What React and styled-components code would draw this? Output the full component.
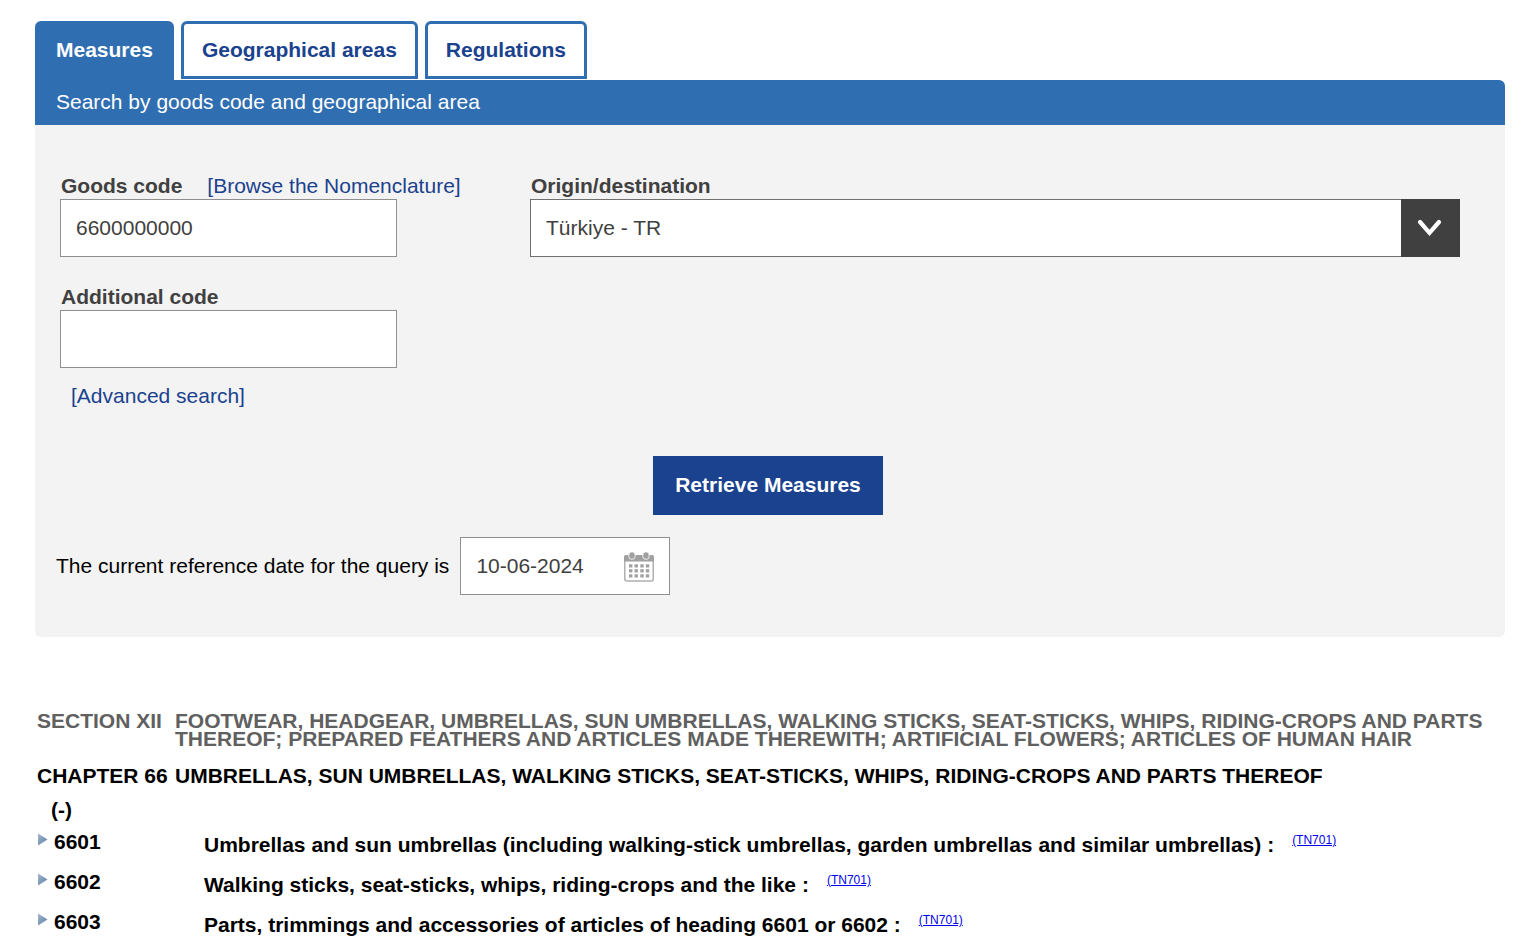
import { useState } from "react";
import styled, { createGlobalStyle } from "styled-components";

const tabs = ["Measures", "Geographical areas", "Regulations"];

const headings = [
  {
    code: "6601",
    text: "Umbrellas and sun umbrellas (including walking-stick umbrellas, garden umbrellas and similar umbrellas) :",
  },
  {
    code: "6602",
    text: "Walking sticks, seat-sticks, whips, riding-crops and the like :",
  },
  {
    code: "6603",
    text: "Parts, trimmings and accessories of articles of heading 6601 or 6602 :",
  },
];

export default function App() {
  const [activeTab, setActiveTab] = useState("Measures");

  return (
    <>
      <GlobalStyle />
      <Page>
        <TabList role="tablist">
          {tabs.map((tab) => (
            <Tab
              key={tab}
              type="button"
              role="tab"
              aria-selected={tab === activeTab}
              $active={tab === activeTab}
              onClick={() => setActiveTab(tab)}
            >
              {tab}
            </Tab>
          ))}
        </TabList>
        <SearchForm />
        <Results />
      </Page>
    </>
  );
}

function SearchForm() {
  return (
    <Panel onSubmit={(e) => e.preventDefault()}>
      <PanelTitle>Search by goods code and geographical area</PanelTitle>
      <Fields>
        <Column>
          <Field>
            <LabelRow>
              <Label htmlFor="goodsCode">Goods code</Label>
              <PanelLink href="#nomenclature">
                [Browse the Nomenclature]
              </PanelLink>
            </LabelRow>
            <Input id="goodsCode" defaultValue="6600000000" />
          </Field>
          <Field>
            <LabelRow>
              <Label htmlFor="additionalCode">Additional code</Label>
            </LabelRow>
            <Input id="additionalCode" />
          </Field>
          <Advanced>
            <PanelLink href="#advanced">[Advanced search]</PanelLink>
          </Advanced>
        </Column>
        <Column>
          <Field>
            <LabelRow>
              <Label htmlFor="origin">Origin/destination</Label>
            </LabelRow>
            <SelectBox>
              <Select id="origin" defaultValue="TR">
                <option value="TR">Türkiye - TR</option>
              </Select>
              <SelectArrow>
                <svg width="27" height="20" viewBox="0 0 27 20" aria-hidden="true">
                  <path
                    d="M3 4L12.5 14.8L22 4"
                    fill="none"
                    stroke="#fff"
                    strokeWidth="4.2"
                    strokeLinecap="round"
                  />
                </svg>
              </SelectArrow>
            </SelectBox>
          </Field>
        </Column>
      </Fields>
      <Actions>
        <SubmitButton type="submit">Retrieve Measures</SubmitButton>
      </Actions>
      <DateRow>
        <label htmlFor="refDate">
          The current reference date for the query is
        </label>
        <DateBox>
          <DateInput id="refDate" defaultValue="10-06-2024" />
          <CalendarButton type="button" aria-label="Choose date">
            <CalendarIcon />
          </CalendarButton>
        </DateBox>
      </DateRow>
    </Panel>
  );
}

function Results() {
  return (
    <ResultsWrapper>
      <SectionTitle>
        <span>SECTION XII</span>
        <span>
          FOOTWEAR, HEADGEAR, UMBRELLAS, SUN UMBRELLAS, WALKING STICKS,
          SEAT-STICKS, WHIPS, RIDING-CROPS AND PARTS THEREOF; PREPARED FEATHERS
          AND ARTICLES MADE THEREWITH; ARTIFICIAL FLOWERS; ARTICLES OF HUMAN
          HAIR
        </span>
      </SectionTitle>
      <ChapterTitle>
        <span>CHAPTER 66</span>
        <span>
          UMBRELLAS, SUN UMBRELLAS, WALKING STICKS, SEAT-STICKS, WHIPS,
          RIDING-CROPS AND PARTS THEREOF
        </span>
      </ChapterTitle>
      <Collapse>(-)</Collapse>
      <Table>
        <tbody>
          {headings.map(({ code, text }) => (
            <tr key={code}>
              <CodeCell>
                <CodeWrapper>
                  <ArrowIcon />
                  {code}
                </CodeWrapper>
              </CodeCell>
              <TextCell>
                {text}
                <Footnote href="#TN701">(TN701)</Footnote>
              </TextCell>
            </tr>
          ))}
        </tbody>
      </Table>
    </ResultsWrapper>
  );
}

function CalendarIcon() {
  return (
    <svg width="30" height="30" viewBox="0 0 30 30" aria-hidden="true">
      <rect
        x="0.75"
        y="4"
        width="28.5"
        height="25"
        rx="2"
        fill="#fff"
        stroke="#b0b0b0"
        strokeWidth="1.5"
      />
      <path d="M0 9.5V5a2 2 0 0 1 2-2h26a2 2 0 0 1 2 2v4.5z" fill="#a0a0a0" />
      {[8, 22].map((x) => (
        <rect
          key={x}
          x={x - 3.2}
          y="-0.2"
          width="6.4"
          height="7.6"
          rx="3.2"
          fill="#a0a0a0"
          stroke="#fff"
          strokeWidth="0.8"
        />
      ))}
      {[12.3, 17.2, 22.3].map((y) =>
        [5, 10.5, 16.3, 21.8].map((x) => (
          <rect key={`${x}-${y}`} x={x} y={y} width="3.4" height="3.2" fill="#a0a0a0" />
        ))
      )}
    </svg>
  );
}

function ArrowIcon() {
  return (
    <svg width="10" height="13" viewBox="0 0 10 13" aria-hidden="true">
      <defs>
        <linearGradient id="arrowFill" x1="0" y1="0" x2="1" y2="1">
          <stop offset="0" stopColor="#a3b5c9" />
          <stop offset="1" stopColor="#5b7fa8" />
        </linearGradient>
      </defs>
      <path d="M0 0.5L9.5 6.5L0 12.5z" fill="url(#arrowFill)" />
    </svg>
  );
}

const GlobalStyle = createGlobalStyle`
  * {
    box-sizing: border-box;
  }
  body {
    margin: 0;
    background: #ffffff;
    color: #000000;
    font-family: Arial, "Liberation Sans", sans-serif;
    font-size: 21px;
    line-height: 24px;
  }
  input, select, button {
    font: inherit;
    border-radius: 0;
  }
`;

const Page = styled.main`
  padding: 21px 31px 0 35px;
`;

const TabList = styled.div`
  display: flex;
  align-items: flex-start;
  gap: 7px;
`;

const Tab = styled.button`
  height: ${({ $active }) => ($active ? "59px" : "58px")};
  padding: ${({ $active }) => ($active ? "0 18px 1px" : "0 18px")};
  border: 3px solid #2f6eb0;
  border-radius: 6px 6px 0 0;
  background: ${({ $active }) => ($active ? "#2f6eb0" : "#ffffff")};
  color: ${({ $active }) => ($active ? "#ffffff" : "#1a428e")};
  font-weight: 700;
  cursor: pointer;
`;

const Panel = styled.form`
  display: flex;
  flex-direction: column;
  padding-bottom: 42px;
  background: #f3f3f3;
  border-radius: 0 6px 6px 6px;
`;

const PanelTitle = styled.div`
  padding: 10px 21px 11px;
  background: #2f6eb0;
  border-radius: 0 6px 0 0;
  color: #ffffff;
`;

const Fields = styled.div`
  display: grid;
  grid-template-columns: 1fr 2fr;
  gap: 5px;
  padding: 49px 45px 0 25px;
`;

const Column = styled.div`
  display: flex;
  flex-direction: column;
  gap: 28px;
`;

const Field = styled.div`
  display: flex;
  flex-direction: column;
  gap: 1px;
`;

const LabelRow = styled.div`
  display: flex;
  gap: 25px;
  padding-left: 1px;
  white-space: nowrap;
`;

const Label = styled.label`
  color: #404040;
  font-weight: 700;
`;

const PanelLink = styled.a`
  color: #1a428e;
  text-decoration: none;
`;

const Input = styled.input`
  width: 100%;
  max-width: 337px;
  height: 58px;
  padding: 0 15px;
  border: 1px solid #8f8f8f;
  background: #ffffff;
  color: #404040;
`;

const SelectBox = styled.div`
  position: relative;
`;

const Select = styled.select`
  width: 100%;
  height: 58px;
  padding: 0 74px 0 15px;
  border: 1px solid #707070;
  background: #ffffff;
  color: #404040;
  appearance: none;
`;

const SelectArrow = styled.span`
  position: absolute;
  top: 0;
  right: 0;
  bottom: 0;
  width: 59px;
  display: flex;
  align-items: center;
  justify-content: center;
  background: #404040;
  pointer-events: none;
`;

const Advanced = styled.div`
  margin-top: -12px;
  padding-left: 11px;
`;

const Actions = styled.div`
  display: flex;
  justify-content: center;
  margin-top: 48px;
  padding-right: 4px;
`;

const SubmitButton = styled.button`
  height: 59px;
  padding: 0 22px 1px;
  border: none;
  background: #1a428e;
  color: #ffffff;
  font-weight: 700;
  cursor: pointer;
`;

const DateRow = styled.div`
  display: flex;
  align-items: center;
  gap: 11px;
  margin-top: 22px;
  padding-left: 21px;
`;

const DateBox = styled.div`
  display: flex;
  align-items: center;
  width: 210px;
  height: 58px;
  padding: 0 15px;
  border: 1px solid #8f8f8f;
  background: #ffffff;
`;

const DateInput = styled.input`
  flex: 1;
  min-width: 0;
  padding: 0;
  border: none;
  outline: none;
  background: none;
  color: #404040;
`;

const CalendarButton = styled.button`
  display: flex;
  padding: 2px 0 0;
  border: none;
  background: none;
  cursor: pointer;
`;

const ResultsWrapper = styled.section`
  margin-top: 75px;
  padding-left: 2px;
  font-weight: 700;
`;

const SectionTitle = styled.h2`
  display: grid;
  grid-template-columns: 138px 1fr;
  margin: 0;
  color: #606060;
  font-size: 21px;
  line-height: 18px;
`;

const ChapterTitle = styled.h3`
  display: grid;
  grid-template-columns: 138px 1fr;
  margin: 16px 0 0;
  font-size: 21px;
  line-height: 24px;
`;

const Collapse = styled.div`
  margin-top: 10px;
  padding-left: 14px;
`;

const Table = styled.table`
  width: 100%;
  margin-top: 7px;
  border-collapse: collapse;
`;

const CodeCell = styled.td`
  width: 167px;
  padding: 1px 0 0;
  vertical-align: top;
`;

const CodeWrapper = styled.div`
  display: flex;
  align-items: flex-start;
  gap: 6px;
  padding-left: 1px;

  svg {
    margin-top: 3px;
  }
`;

const TextCell = styled.td`
  padding: 4px 0 12px;
  vertical-align: top;

  tr:last-child & {
    padding-bottom: 0;
  }
`;

const Footnote = styled.a`
  display: inline-block;
  margin-left: 18px;
  color: #0000ee;
  font-size: 12px;
  font-weight: 400;
  line-height: 14px;
  vertical-align: 8px;
`;
